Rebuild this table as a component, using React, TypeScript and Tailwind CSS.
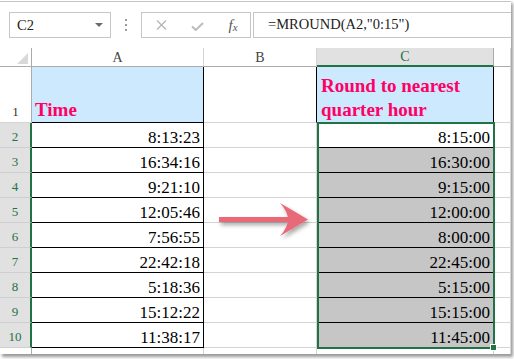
import React from 'react';

// Spreadsheet view: formula bar + a small sheet with time values rounded to 15 minutes.

const rows: [string, string][] = [
  ['8:13:23', '8:15:00'],
  ['16:34:16', '16:30:00'],
  ['9:21:10', '9:15:00'],
  ['12:05:46', '12:00:00'],
  ['7:56:55', '8:00:00'],
  ['22:42:18', '22:45:00'],
  ['5:18:36', '5:15:00'],
  ['15:12:22', '15:15:00'],
  ['11:38:17', '11:45:00'],
];

function FormulaBar() {
  return (
    <div className="h-[48px] pt-px">
      <div className="h-[47px] border-t border-[#c6c6c6] pt-[10px] flex items-start">
        {/* name box */}
        <div className="ml-[9px] w-[102px] h-[26px] border border-[#c6c6c6] flex items-center pl-[7px] pr-[7px] text-[14.5px] text-[#222]">
          <span className="flex-1 leading-none">C2</span>
          <span className="w-0 h-0 border-x-[4px] border-x-transparent border-t-[4px] border-t-[#6b6b6b]" />
        </div>
        {/* grip dots */}
        <div className="w-[30px] h-[26px] flex flex-col items-center justify-center gap-[3px]">
          <span className="w-[2px] h-[2px] bg-[#9a9a9a]" />
          <span className="w-[2px] h-[2px] bg-[#9a9a9a]" />
          <span className="w-[2px] h-[2px] bg-[#9a9a9a]" />
        </div>
        {/* cancel / enter / insert function */}
        <div className="w-[110px] h-[26px] border border-[#c6c6c6] flex items-center">
          <div className="w-[37px] flex justify-center pl-[1px]">
            <svg width="11" height="10" viewBox="0 0 11 10">
              <path d="M1 0.5 L10 9.5 M10 0.5 L1 9.5" stroke="#b4b4b4" strokeWidth="1.2" fill="none" />
            </svg>
          </div>
          <div className="w-[37px] flex justify-center pt-[3px]">
            <svg width="13" height="9" viewBox="0 0 13 9">
              <path d="M1 4.5 L4.8 8 L12 1" stroke="#bcbcbc" strokeWidth="2" fill="none" />
            </svg>
          </div>
          <div className="flex-1 flex justify-center text-[#555] italic leading-none">
            <span className="text-[15px]">f</span>
            <span className="text-[11px] self-end">x</span>
          </div>
        </div>
        {/* formula text */}
        <div className="ml-[2px] flex-1 h-[26px] border-y border-l border-[#c6c6c6] flex items-center pl-[14px] text-[14.5px] text-[#222]">
          =MROUND(A2,"0:15")
        </div>
      </div>
    </div>
  );
}

function Arrow() {
  return (
    <svg width="104" height="50" viewBox="0 0 104 50" className="absolute left-[214px] top-[150px] pointer-events-none">
      <defs>
        <filter id="arrowShadow" x="-20%" y="-40%" width="140%" height="180%">
          <feDropShadow dx="2" dy="3" stdDeviation="2" floodColor="#000" floodOpacity="0.35" />
        </filter>
      </defs>
      <g filter="url(#arrowShadow)" fill="#e86b79">
        <rect x="5" y="19" width="72" height="5" />
        <path d="M66 5 Q80 13 94 21.5 Q80 30 66 38 Q74 29 74 21.5 Q74 14 66 5 Z" />
      </g>
    </svg>
  );
}

function Sheet() {
  return (
    <div className="relative grid grid-cols-[32px_172px_113px_177px_17px] grid-rows-[19px_56px_repeat(9,25px)_6px]">
      {/* column headers */}
      <div className="border-r border-b border-[#ababab] flex items-end justify-end pr-[3px] pb-[2px]">
        <svg width="11" height="11" viewBox="0 0 11 11">
          <path d="M11 0 L11 11 L0 11 Z" fill="#d9d9d9" />
        </svg>
      </div>
      <div className="border-r border-r-[#d4d4d4] border-b border-b-[#ababab] flex items-end justify-center text-[14px] leading-[17px] text-[#444]">A</div>
      <div className="border-r border-r-[#d4d4d4] border-b border-b-[#ababab] flex items-end justify-center text-[14px] leading-[17px] text-[#444]">B</div>
      <div className="bg-[#e1e1e1] border-r border-r-[#ababab] border-b-2 border-b-[#217346] flex items-end justify-center text-[14px] leading-[16px] text-[#217346]">C</div>
      <div className="border-r border-r-[#d4d4d4] border-b border-b-[#ababab]" />

      {/* row 1: headings */}
      <div className="border-r border-r-[#ababab] border-b border-b-[#d4d4d4] flex items-end justify-center pb-[2px] text-[13px] leading-[17px] text-[#333]">1</div>
      <div className="bg-[#cce9fd] border-r border-b border-black flex items-end pl-[3px] text-[19px] leading-[24px] font-bold text-[#ff0066]">Time</div>
      <div className="border-r border-r-black border-b border-b-[#d4d4d4]" />
      <div className="bg-[#cce9fd] border-r border-b border-black flex items-end pl-[4px] text-[19px] leading-[24px] font-bold text-[#ff0066]">
        Round to nearest quarter hour
      </div>
      <div className="border-r border-b border-[#d4d4d4]" />

      {/* rows 2-10: data */}
      {rows.map(([time, rounded], i) => (
        <React.Fragment key={i}>
          <div className="bg-[#e1e1e1] border-r-2 border-r-[#217346] border-b border-b-[#cfcfcf] flex items-end justify-center pb-[2px] text-[13px] leading-[17px] text-[#217346]">
            {i + 2}
          </div>
          <div className="border-r border-b border-black flex items-end justify-end pr-[3px] text-[17px] leading-[19px] text-black">{time}</div>
          <div className="border-r border-b border-[#d4d4d4]" />
          <div className={`${i === 0 ? 'bg-white' : 'bg-[#c6c6c6]'} border-r border-r-[#d4d4d4] border-b border-b-black flex items-end justify-end pr-[3px] text-[17px] leading-[19px] text-black`}>
            {rounded}
          </div>
          <div className="border-r border-b border-[#d4d4d4]" />
        </React.Fragment>
      ))}

      {/* row 11, cut off */}
      <div className="border-r border-r-[#ababab] flex justify-center pt-[5px] text-[13px] leading-[17px] text-[#444] overflow-hidden">11</div>
      <div className="border-r border-[#d4d4d4]" />
      <div className="border-r border-[#d4d4d4]" />
      <div className="border-r border-[#d4d4d4]" />
      <div className="border-r border-[#d4d4d4]" />

      {/* selection C2:C10 with fill handle */}
      <div className="absolute left-[317px] top-[74px] w-[178px] h-[227px] border-2 border-[#217346] pointer-events-none">
        <span className="absolute -right-[4px] -bottom-[4px] w-[7px] h-[7px] bg-[#217346] border border-white" />
      </div>

      <Arrow />
    </div>
  );
}

export default function App() {
  return (
    <div className="w-[514px] h-[359px] bg-white">
      <div className="relative w-[511px] h-[354px] overflow-hidden bg-white font-['Liberation_Serif',serif] shadow-[2px_3px_3px_rgba(0,0,0,0.4)]">
        <FormulaBar />
        <Sheet />
      </div>
    </div>
  );
}
